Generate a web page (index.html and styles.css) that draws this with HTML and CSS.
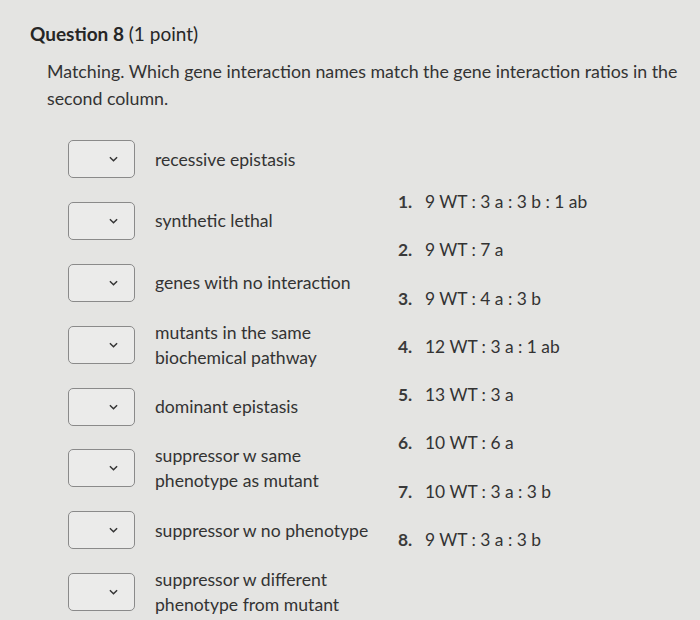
FILE: index.html
```html
<!DOCTYPE html>
<html>
<head>
<meta charset="utf-8">
<link rel="stylesheet" href="styles.css">
</head>
<body>
<div class="question">
  <h2 class="title"><strong>Question 8</strong> (1 point)</h2>
  <p class="prompt">Matching. Which gene interaction names match the gene interaction ratios in the second column.</p>
  <div class="matching">
    <ul class="left">
      <li class="row"><span class="select"><svg class="chev" viewBox="0 0 10 6" width="9" height="6"><path d="M1 1 L5 5 L9 1" fill="none" stroke="#333" stroke-width="1.6"/></svg></span><span class="label">recessive epistasis</span></li>
      <li class="row"><span class="select"><svg class="chev" viewBox="0 0 10 6" width="9" height="6"><path d="M1 1 L5 5 L9 1" fill="none" stroke="#333" stroke-width="1.6"/></svg></span><span class="label">synthetic lethal</span></li>
      <li class="row"><span class="select"><svg class="chev" viewBox="0 0 10 6" width="9" height="6"><path d="M1 1 L5 5 L9 1" fill="none" stroke="#333" stroke-width="1.6"/></svg></span><span class="label">genes with no interaction</span></li>
      <li class="row"><span class="select"><svg class="chev" viewBox="0 0 10 6" width="9" height="6"><path d="M1 1 L5 5 L9 1" fill="none" stroke="#333" stroke-width="1.6"/></svg></span><span class="label">mutants in the same<br>biochemical pathway</span></li>
      <li class="row"><span class="select"><svg class="chev" viewBox="0 0 10 6" width="9" height="6"><path d="M1 1 L5 5 L9 1" fill="none" stroke="#333" stroke-width="1.6"/></svg></span><span class="label">dominant epistasis</span></li>
      <li class="row"><span class="select"><svg class="chev" viewBox="0 0 10 6" width="9" height="6"><path d="M1 1 L5 5 L9 1" fill="none" stroke="#333" stroke-width="1.6"/></svg></span><span class="label">suppressor w same<br>phenotype as mutant</span></li>
      <li class="row"><span class="select"><svg class="chev" viewBox="0 0 10 6" width="9" height="6"><path d="M1 1 L5 5 L9 1" fill="none" stroke="#333" stroke-width="1.6"/></svg></span><span class="label">suppressor w no phenotype</span></li>
      <li class="row"><span class="select"><svg class="chev" viewBox="0 0 10 6" width="9" height="6"><path d="M1 1 L5 5 L9 1" fill="none" stroke="#333" stroke-width="1.6"/></svg></span><span class="label">suppressor w different<br>phenotype from mutant</span></li>
    </ul>
    <ol class="right">
      <li><span class="num">1.</span>9 WT : 3 a : 3 b : 1 ab</li>
      <li><span class="num">2.</span>9 WT : 7 a</li>
      <li><span class="num">3.</span>9 WT : 4 a : 3 b</li>
      <li><span class="num">4.</span>12 WT : 3 a : 1 ab</li>
      <li><span class="num">5.</span>13 WT : 3 a</li>
      <li><span class="num">6.</span>10 WT : 6 a</li>
      <li><span class="num">7.</span>10 WT : 3 a : 3 b</li>
      <li><span class="num">8.</span>9 WT : 3 a : 3 b</li>
    </ol>
  </div>
</div>
</body>
</html>
```
FILE: styles.css
```css
html, body {
  margin: 0;
  padding: 0;
}
body {
  background: #e4e4e2;
  font-family: Lato, "Open Sans", sans-serif;
  color: #2f2f2f;
  width: 700px;
  height: 620px;
  overflow: hidden;
}
.question {
  padding: 22px 0 0 30px;
}
.title {
  margin: 0;
  font-size: 19px;
  font-weight: 400;
  line-height: 24px;
  color: #262626;
}
.title strong {
  font-weight: 700;
}
.prompt {
  margin: 12px 10px 0 17px;
  font-size: 17.8px;
  line-height: 27px;
  color: #333;
}
.matching {
  display: flex;
  margin-top: 28px;
  padding-left: 38px;
}
.left {
  list-style: none;
  margin: 0;
  padding: 0;
  width: 330px;
  display: grid;
  grid-auto-rows: 38px;
  row-gap: 23.9px;
}
.row {
  display: flex;
  align-items: center;
  gap: 20px;
  height: 38px;
}
.select {
  flex: none;
  box-sizing: border-box;
  width: 67px;
  height: 38px;
  border: 1.5px solid #8a8a8a;
  border-radius: 5px;
  background: #ebebea;
  display: flex;
  align-items: center;
  justify-content: flex-end;
  padding-right: 16px;
}
.label {
  font-size: 17.6px;
  line-height: 25px;
  color: #333;
  white-space: nowrap;
}
.right {
  list-style: none;
  margin: 50px 0 0 0;
  padding: 0;
  display: flex;
  flex-direction: column;
  gap: 24.3px;
}
.right li {
  font-size: 17.4px;
  line-height: 24px;
  color: #333;
  display: flex;
  white-space: nowrap;
}
.num {
  width: 27px;
  font-weight: 700;
  color: #3a3a3a;
}
```
